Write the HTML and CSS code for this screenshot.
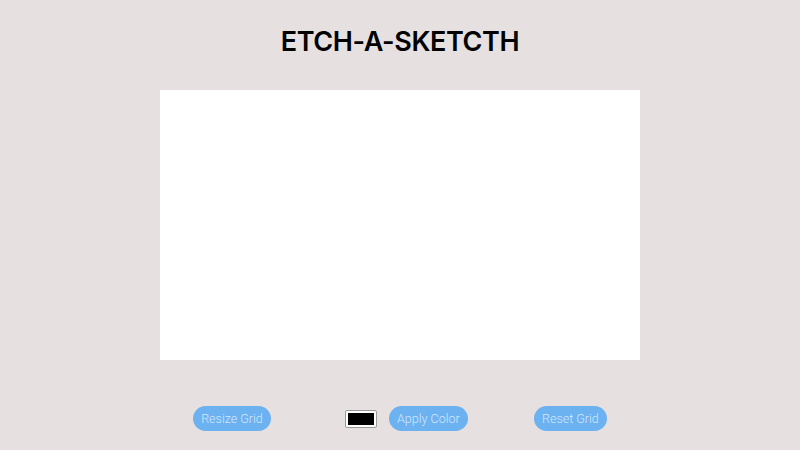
FILE: index.html
```html
<!DOCTYPE html>
<html lang="en">
<head>
    <meta charset="UTF-8">
    <meta name="viewport" content="width=device-width, initial-scale=1.0">
    <title>Etch-a-Sketch</title>
    <link rel="stylesheet" href="styles.css">
</head>
<body>

    <h1 class="title">ETCH-A-SKETCTH</h1>

    <div class="board">
        <div class="grid" id="grid"></div>

        <div class="controls">
            <button class="btn" id="resizeBtn">Resize Grid</button>
            <div class="color-group">
                <input type="color" id="colorPicker" value="#000000">
                <button class="btn" id="applyBtn">Apply Color</button>
            </div>
            <button class="btn" id="resetBtn">Reset Grid</button>
        </div>
    </div>

</body>
</html>
```

FILE: styles.css
```css
/* General Body Styles */
body {
    font-family: 'Inter', 'Noto Sans', sans-serif;
    background-color: #e6e0e0;
    margin: 0;
    display: flex;
    flex-direction: column;
    align-items: center;
}

/* Page heading */
.title {
    margin: 26px 0 32px;
    font-size: 27px;
    font-weight: 600;
    letter-spacing: -0.4px;
    color: #000;
    line-height: 32px;
}

/* Wrapper holding the drawing area and the buttons */
.board {
    width: 480px;
}

/* Drawing area */
.grid {
    width: 480px;
    height: 270px;
    background-color: #ffffff;
}

/* Button row */
.controls {
    display: flex;
    justify-content: space-around;
    align-items: center;
    margin-top: 46px;
}

.color-group {
    display: flex;
    align-items: center;
    gap: 12px;
    margin-left: 8px;
}

.btn {
    font-family: 'Roboto', sans-serif;
    font-size: 12.5px;
    font-weight: 300;
    color: #d4e7fa;
    background-color: #6cb2f1;
    border: none;
    border-radius: 13px;
    height: 25px;
    padding: 0 8px;
    cursor: pointer;
}

/* Colour picker swatch */
input[type="color"] {
    -webkit-appearance: none;
    appearance: none;
    width: 32px;
    height: 18px;
    padding: 2px;
    border: 1px solid #9a9a9a;
    border-radius: 2px;
    background-color: #ffffff;
    box-sizing: border-box;
    cursor: pointer;
}

input[type="color"]::-webkit-color-swatch-wrapper {
    padding: 0;
}

input[type="color"]::-webkit-color-swatch {
    border: none;
    border-radius: 0;
}
```
